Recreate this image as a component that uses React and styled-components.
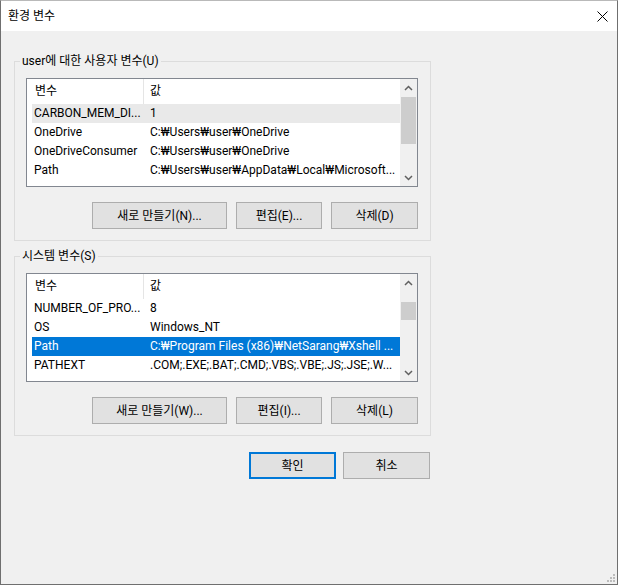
import React from "react";
import styled, { createGlobalStyle } from "styled-components";

const GlobalStyle = createGlobalStyle`
  html, body {
    margin: 0;
    padding: 0;
    background: #f0f0f0;
  }
  * {
    box-sizing: border-box;
  }
`;

const FONT = `Roboto, "Noto Sans CJK KR", sans-serif`;

const Window = styled.div`
  width: 618px;
  height: 585px;
  border: 1px solid #6f6f6f;
  border-top-color: #b9b9b9;
  display: flex;
  flex-direction: column;
  font-family: ${FONT};
  font-size: 12px;
  color: #000;
  background: #f0f0f0;
`;

const TitleBar = styled.div`
  height: 30px;
  background: #fff;
  display: flex;
  align-items: center;
  justify-content: space-between;
  padding: 0 9px 0 7px;
  flex-shrink: 0;
`;

const Title = styled.span`
  line-height: 14px;
  font-size: 12px;
`;

const CloseIcon = styled.svg`
  width: 11px;
  height: 11px;
  display: block;
`;

const Body = styled.div`
  flex: 1;
  position: relative;
  padding-left: 13px;
`;

const Column = styled.div`
  width: 417px;
  display: flex;
  flex-direction: column;
`;

const Group = styled.fieldset`
  margin: ${(p) => p.$top}px 0 0 0;
  padding: 0 12px 11px 11px;
  border: 1px solid #dcdcdc;
  min-width: 0;
`;

const Legend = styled.legend`
  padding: 0 2px;
  margin-left: -6px;
  line-height: 14px;
  font-size: 12px;
`;

const List = styled.div`
  margin-top: 10px;
  width: 392px;
  height: 109px;
  border: 1px solid #828790;
  background: #fff;
  display: flex;
  overflow: hidden;
`;

const ListBody = styled.div`
  flex: 1;
  min-width: 0;
  display: flex;
  flex-direction: column;
`;

const Header = styled.div`
  height: 25px;
  display: grid;
  grid-template-columns: 117px 1fr;
  line-height: 25px;
  flex-shrink: 0;
`;

const HeaderCell = styled.div`
  padding-left: ${(p) => p.$pad}px;
  border-right: ${(p) => (p.$divider ? "1px solid #e5e5e5" : "none")};
`;

const Rows = styled.div`
  padding-left: 5px;
  display: flex;
  flex-direction: column;
`;

const Row = styled.div`
  height: 19px;
  display: grid;
  grid-template-columns: 111px 1fr;
  line-height: 19px;
  background: ${(p) => (p.$state === "active" ? "#0078d7" : p.$state === "inactive" ? "#e9e9e9" : "transparent")};
  color: ${(p) => (p.$state === "active" ? "#fff" : "#000")};
`;

const Cell = styled.div`
  padding-left: ${(p) => p.$pad}px;
  white-space: nowrap;
  overflow: hidden;
`;

const ScrollBar = styled.div`
  width: 17px;
  flex-shrink: 0;
  background: #f0f0f0;
  display: flex;
  flex-direction: column;
`;

const ArrowBox = styled.div`
  height: 17px;
  display: flex;
  align-items: center;
  justify-content: center;
  flex-shrink: 0;
  margin-top: ${(p) => (p.$bottom ? "auto" : "0")};
`;

const Thumb = styled.div`
  margin: ${(p) => p.$offset}px 1px 0 1px;
  height: ${(p) => p.$size}px;
  background: #cdcdcd;
`;

const ButtonRow = styled.div`
  display: flex;
  justify-content: flex-end;
  gap: ${(p) => p.$gap}px;
  margin-top: ${(p) => p.$top}px;
  padding-right: ${(p) => p.$right || 0}px;
`;

const Button = styled.button`
  width: ${(p) => p.$w}px;
  height: 27px;
  background: #e1e1e1;
  border: ${(p) => (p.$default ? "2px solid #0078d7" : "1px solid #adadad")};
  font-family: ${FONT};
  font-size: 12px;
  color: #000;
  padding: 0;
  line-height: 14px;
  cursor: default;
`;

const Grip = styled.svg`
  position: absolute;
  right: 2px;
  bottom: 2px;
  width: 9px;
  height: 9px;
`;

function Chevron({ up }) {
  return (
    <svg width="9" height="6" viewBox="0 0 9 6">
      <polyline
        points={up ? "1,5 4.5,1.5 8,5" : "1,1 4.5,4.5 8,1"}
        fill="none"
        stroke="#606060"
        strokeWidth="1.5"
      />
    </svg>
  );
}

function VarList({ rows, thumbOffset, thumbSize }) {
  return (
    <List>
      <ListBody>
        <Header>
          <HeaderCell $pad={8} $divider>변수</HeaderCell>
          <HeaderCell $pad={6}>값</HeaderCell>
        </Header>
        <Rows>
          {rows.map((r) => (
            <Row key={r.name + r.value} $state={r.state}>
              <Cell $pad={2}>{r.name}</Cell>
              <Cell $pad={7}>{r.value}</Cell>
            </Row>
          ))}
        </Rows>
      </ListBody>
      <ScrollBar>
        <ArrowBox>
          <Chevron up />
        </ArrowBox>
        <Thumb $offset={thumbOffset} $size={thumbSize} />
        <ArrowBox $bottom>
          <Chevron />
        </ArrowBox>
      </ScrollBar>
    </List>
  );
}

const userVars = [
  { name: "CARBON_MEM_DI...", value: "1", state: "inactive" },
  { name: "OneDrive", value: "C:₩Users₩user₩OneDrive" },
  { name: "OneDriveConsumer", value: "C:₩Users₩user₩OneDrive" },
  { name: "Path", value: "C:₩Users₩user₩AppData₩Local₩Microsoft..." },
];

const systemVars = [
  { name: "NUMBER_OF_PRO...", value: "8" },
  { name: "OS", value: "Windows_NT" },
  { name: "Path", value: "C:₩Program Files (x86)₩NetSarang₩Xshell ...", state: "active" },
  { name: "PATHEXT", value: ".COM;.EXE;.BAT;.CMD;.VBS;.VBE;.JS;.JSE;.W..." },
];

export default function App() {
  return (
    <>
      <GlobalStyle />
      <Window>
        <TitleBar>
          <Title>환경 변수</Title>
          <CloseIcon viewBox="0 0 11 11">
            <line x1="0.5" y1="0.5" x2="10.5" y2="10.5" stroke="#000" strokeWidth="1" />
            <line x1="10.5" y1="0.5" x2="0.5" y2="10.5" stroke="#000" strokeWidth="1" />
          </CloseIcon>
        </TitleBar>
        <Body>
          <Column>
            <Group $top={23}>
              <Legend>user에 대한 사용자 변수(U)</Legend>
              <VarList rows={userVars} thumbOffset={1} thumbSize={47} />
              <ButtonRow $gap={9} $top={15}>
                <Button $w={135}>새로 만들기(N)...</Button>
                <Button $w={86}>편집(E)...</Button>
                <Button $w={87}>삭제(D)</Button>
              </ButtonRow>
            </Group>
            <Group $top={8}>
              <Legend>시스템 변수(S)</Legend>
              <VarList rows={systemVars} thumbOffset={11} thumbSize={18} />
              <ButtonRow $gap={9} $top={15}>
                <Button $w={135}>새로 만들기(W)...</Button>
                <Button $w={86}>편집(I)...</Button>
                <Button $w={87}>삭제(L)</Button>
              </ButtonRow>
            </Group>
            <ButtonRow $gap={7} $top={16} $right={1}>
              <Button $w={87} $default>확인</Button>
              <Button $w={87}>취소</Button>
            </ButtonRow>
          </Column>
          <Grip viewBox="0 0 9 9">
            <rect x="7" y="1" width="2" height="2" fill="#bcbcbc" />
            <rect x="4" y="4" width="2" height="2" fill="#bcbcbc" />
            <rect x="7" y="4" width="2" height="2" fill="#bcbcbc" />
            <rect x="1" y="7" width="2" height="2" fill="#bcbcbc" />
            <rect x="4" y="7" width="2" height="2" fill="#bcbcbc" />
            <rect x="7" y="7" width="2" height="2" fill="#bcbcbc" />
          </Grip>
        </Body>
      </Window>
    </>
  );
}
